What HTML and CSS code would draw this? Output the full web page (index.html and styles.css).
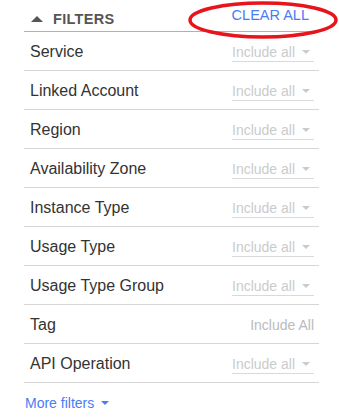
FILE: index.html
```html
<!DOCTYPE html>
<html lang="en">
  <head>
    <meta charset="UTF-8">
    <title>Filters</title>
    <link rel="stylesheet" href="styles.css">
  </head>
  <body>
    <div class="filters">
      <div class="filters-head">
        <span class="head-title"><span class="head-caret"></span>FILTERS</span>
        <a class="clear-all">CLEAR ALL</a>
        <svg class="clear-ring" width="154" height="40" viewBox="0 0 154 40">
          <ellipse cx="76" cy="20" rx="73" ry="17" fill="none" stroke="#e8141b" stroke-width="3.5"/>
        </svg>
      </div>
      <div class="filter-row"><span class="filter-name">Service</span><span class="filter-select">Include all<i class="select-caret"></i></span></div>
      <div class="filter-row"><span class="filter-name">Linked Account</span><span class="filter-select">Include all<i class="select-caret"></i></span></div>
      <div class="filter-row"><span class="filter-name">Region</span><span class="filter-select">Include all<i class="select-caret"></i></span></div>
      <div class="filter-row"><span class="filter-name">Availability Zone</span><span class="filter-select">Include all<i class="select-caret"></i></span></div>
      <div class="filter-row"><span class="filter-name">Instance Type</span><span class="filter-select">Include all<i class="select-caret"></i></span></div>
      <div class="filter-row"><span class="filter-name">Usage Type</span><span class="filter-select">Include all<i class="select-caret"></i></span></div>
      <div class="filter-row"><span class="filter-name">Usage Type Group</span><span class="filter-select">Include all<i class="select-caret"></i></span></div>
      <div class="filter-row"><span class="filter-name">Tag</span><span class="filter-plain">Include All</span></div>
      <div class="filter-row"><span class="filter-name">API Operation</span><span class="filter-select">Include all<i class="select-caret"></i></span></div>
      <a class="more-filters">More filters<i class="more-caret"></i></a>
    </div>
  </body>
</html>
```
FILE: styles.css
```css
* {
  margin: 0;
  padding: 0;
  box-sizing: border-box;
}
body {
  background: #fff;
  font-family: "Liberation Sans", Arial, sans-serif;
  color: #333;
}
.filters {
  width: 319px;
  padding-left: 24px;
}
.filters-head {
  position: relative;
  height: 32px;
  padding: 7px 10px 0 7px;
  border-bottom: 1px solid #a3b5b9;
  display: flex;
  justify-content: space-between;
  line-height: 17px;
  font-size: 14.5px;
}
.head-title {
  font-weight: bold;
  color: #555;
  letter-spacing: 0.3px;
  display: flex;
  align-items: center;
}
.head-caret {
  width: 0;
  height: 0;
  border-left: 6px solid transparent;
  border-right: 6px solid transparent;
  border-bottom: 6px solid #555;
  margin-right: 10px;
}
.clear-all {
  color: #4a7cf4;
}
.clear-ring {
  position: absolute;
  left: 163px;
  top: 0;
}
.filter-row {
  height: 39px;
  border-bottom: 1px solid #d6d6d6;
  display: flex;
  align-items: center;
  justify-content: space-between;
  padding: 2px 5px 0 6px;
}
.filter-name {
  font-size: 16px;
  color: #333;
}
.filter-select {
  display: flex;
  align-items: center;
  width: 82px;
  font-size: 14px;
  color: #cbcbcb;
  border-bottom: 1px solid #d9d9d9;
  padding: 0 0 1px 0;
  margin-top: 2px;
}
.select-caret {
  width: 0;
  height: 0;
  border-left: 4px solid transparent;
  border-right: 4px solid transparent;
  border-top: 4px solid #cbcbcb;
  margin-left: 7px;
}
.filter-plain {
  font-size: 14px;
  color: #bbb;
}
.more-filters {
  display: flex;
  align-items: center;
  padding: 12px 0 0 1px;
  font-size: 14px;
  color: #4a7cf4;
}
.more-caret {
  width: 0;
  height: 0;
  border-left: 4px solid transparent;
  border-right: 4px solid transparent;
  border-top: 4px solid #4a7cf4;
  margin-left: 7px;
}
```
